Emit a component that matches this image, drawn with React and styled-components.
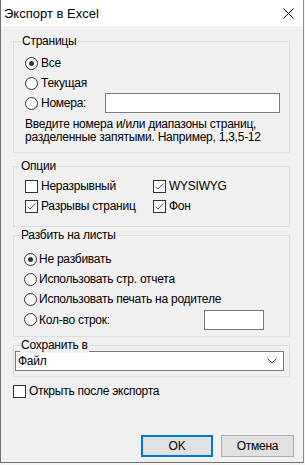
import React from 'react'
import styled, { createGlobalStyle } from 'styled-components'

const GlobalStyle = createGlobalStyle`
  html, body {
    margin: 0;
    padding: 0;
    background: #f7f7f7;
  }
  body {
    font-family: "Segoe UI", "Liberation Sans", Arial, sans-serif;
    font-size: 12px;
    letter-spacing: -0.25px;
    color: #000;
  }
`

const Window = styled.div`
  width: 302px;
  height: 462px;
  background: #f0f0f0;
  border-left: 1px solid #6f6f6f;
  border-right: 1px solid #8c8c8c;
  border-bottom: 1px solid #6f6f6f;
  display: flex;
  flex-direction: column;
`

const TitleBar = styled.div`
  height: 26px;
  background: #fff;
  display: flex;
  align-items: center;
  justify-content: space-between;
  padding: 0 9px 0 3px;
  font-size: 13px;
  letter-spacing: 0;
`

const Body = styled.div`
  flex: 1;
  display: flex;
  flex-direction: column;
  padding: 15px 13px 5px 12px;
`

const Group = styled.div`
  position: relative;
  border: 1px solid #dcdcdc;
  padding: ${p => p.$pad || '10px 10px 8px 11px'};
  margin-bottom: ${p => p.$mb || 8}px;
`

const Legend = styled.span`
  position: absolute;
  top: -8px;
  left: ${p => p.$left || 6}px;
  padding: 0 1px;
  background: #f0f0f0;
  line-height: 15px;
`

const Row = styled.div`
  display: flex;
  align-items: center;
  height: ${p => p.$h || 20}px;
`

const Radio = styled.span`
  width: 13px;
  height: 13px;
  box-sizing: border-box;
  border-radius: 50%;
  border: 1px solid #333;
  background: #fff;
  display: inline-flex;
  align-items: center;
  justify-content: center;
  margin-right: ${p => p.$gap ?? 3}px;
  flex: none;
  &::after {
    content: '';
    width: 5px;
    height: 5px;
    border-radius: 50%;
    background: ${p => (p.$on ? '#333' : 'transparent')};
  }
`

const Box = styled.span`
  width: 13px;
  height: 13px;
  box-sizing: border-box;
  border: 1px solid #333;
  background: #fff;
  display: inline-flex;
  align-items: center;
  justify-content: center;
  margin-right: 3px;
  flex: none;
`

const TextInput = styled.div`
  width: ${p => p.$w}px;
  height: 20px;
  box-sizing: border-box;
  border: 1px solid #7a7a7a;
  background: #fff;
  margin-left: auto;
`

const Hint = styled.div`
  margin-top: 5px;
  line-height: 13px;
`

const OptGrid = styled.div`
  display: grid;
  grid-template-columns: 128px 1fr;
`

const Combo = styled.div`
  height: 20px;
  box-sizing: border-box;
  border: 1px solid #7a7a7a;
  background: #fff;
  display: flex;
  align-items: center;
  justify-content: space-between;
  padding: 0 6px 0 2px;
`

const Footer = styled.div`
  margin-top: auto;
  display: flex;
  justify-content: flex-end;
  gap: 8px;
  margin-right: -4px;
`

const Button = styled.div`
  width: ${p => p.$w || 72}px;
  height: 22px;
  box-sizing: border-box;
  display: flex;
  align-items: center;
  justify-content: center;
  background: #e1e1e1;
  border: ${p => (p.$primary ? '2px solid #0078d7' : '1px solid #adadad')};
`

const Check = () => (
  <svg width="11" height="11" viewBox="0 0 11 11">
    <path d="M1.5 5.5 L4 8 L9.5 2.5" fill="none" stroke="#555" strokeWidth="1" />
  </svg>
)

const CheckItem = ({ on, children }) => (
  <Row>
    <Box>{on && <Check />}</Box>
    {children}
  </Row>
)

const RadioItem = ({ on, children, h, gap }) => (
  <Row $h={h}>
    <Radio $on={on} $gap={gap} />
    {children}
  </Row>
)

export default function App() {
  return (
    <>
      <GlobalStyle />
      <Window>
        <TitleBar>
          <span>Экспорт в Excel</span>
          <svg width="11" height="11" viewBox="0 0 11 11">
            <path d="M0.5 0.5 L10.5 10.5 M10.5 0.5 L0.5 10.5" stroke="#000" strokeWidth="1" />
          </svg>
        </TitleBar>
        <Body>
          <Group $pad="11px 9px 8px 11px" $mb={13}>
            <Legend $left={7}>Страницы</Legend>
            <RadioItem on>Все</RadioItem>
            <RadioItem>Текущая</RadioItem>
            <RadioItem>
              Номера:
              <TextInput $w={175} />
            </RadioItem>
            <Hint>
              Введите номера и/или диапазоны страниц,
              <br />
              разделенные запятыми. Например, 1,3,5-12
            </Hint>
          </Group>
          <Group $pad="9px 10px 10px 11px">
            <Legend>Опции</Legend>
            <OptGrid>
              <CheckItem>Неразрывный</CheckItem>
              <CheckItem on>WYSIWYG</CheckItem>
              <CheckItem on>Разрывы страниц</CheckItem>
              <CheckItem on>Фон</CheckItem>
            </OptGrid>
          </Group>
          <Group $pad="13px 25px 6px 10px">
            <Legend>Разбить на листы</Legend>
            <RadioItem on gap={2}>Не разбивать</RadioItem>
            <RadioItem gap={2}>Использовать стр. отчета</RadioItem>
            <RadioItem gap={2}>Использовать печать на родителе</RadioItem>
            <RadioItem h={21} gap={2}>
              Кол-во строк:
              <TextInput $w={60} />
            </RadioItem>
          </Group>
          <Group $pad="5px 5px 5px 1px" $mb={4}>
            <Legend>Сохранить в</Legend>
            <Combo>
              <span>Файл</span>
              <svg width="10" height="6" viewBox="0 0 10 6">
                <path d="M0.5 0.5 L5 5 L9.5 0.5" fill="none" stroke="#333" strokeWidth="1" />
              </svg>
            </Combo>
          </Group>
          <CheckItem>Открыть после экспорта</CheckItem>
          <Footer>
            <Button $primary>OK</Button>
            <Button $w={73}>Отмена</Button>
          </Footer>
        </Body>
      </Window>
    </>
  )
}
